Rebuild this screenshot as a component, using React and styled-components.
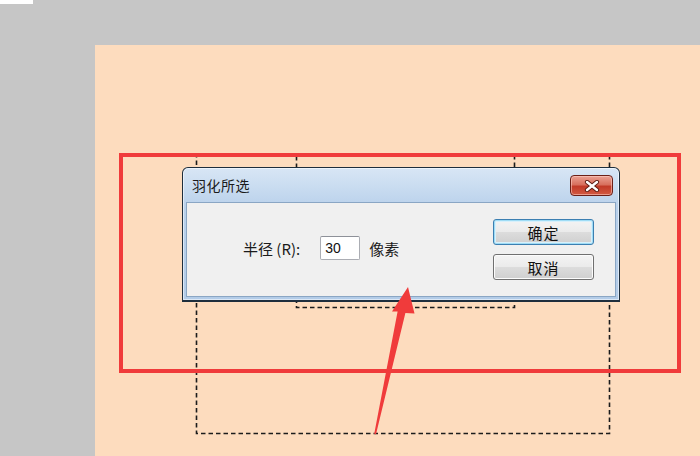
import React from "react";
import styled, { createGlobalStyle } from "styled-components";

const Global = createGlobalStyle`
  html, body { margin: 0; padding: 0; background: #c6c6c6; overflow: hidden; }
  #root { width: 700px; height: 456px; }
`;

const CJK = `"Noto Sans CJK SC", "Microsoft YaHei", sans-serif`;

const Page = styled.div`
  width: 700px;
  height: 456px;
  display: flex;
  flex-direction: column;
  background: #c6c6c6;
`;

const TopStrip = styled.div`
  width: 33px;
  height: 4px;
  background: #ffffff;
  flex: none;
`;

const Workspace = styled.div`
  flex: 1;
  display: flex;
  padding: 41px 0 0 95px;
  min-height: 0;
`;

const Canvas = styled.div`
  position: relative;
  flex: 1;
  background: #fddcbe;
  overflow: hidden;
`;

const Layer = styled.svg`
  position: absolute;
  left: 0;
  top: 0;
  width: 605px;
  height: 411px;
  pointer-events: none;
`;

const Window = styled.div`
  position: absolute;
  left: 87px;
  top: 122px;
  width: 438px;
  height: 135px;
  box-sizing: border-box;
  display: flex;
  flex-direction: column;
  border: 1px solid #1e2e3d;
  border-bottom-width: 2px;
  border-radius: 6px 6px 0 0;
  background: linear-gradient(#d8e6f5, #b9d1eb 30%, #b3cce8);
  padding: 0 3px 3px;
  box-shadow: inset 0 0 0 1px rgba(255, 255, 255, 0.55);
`;

const TitleBar = styled.div`
  height: 34px;
  flex: none;
  display: flex;
  align-items: center;
  justify-content: space-between;
  padding: 0 3px 0 6px;
`;

const Title = styled.span`
  font-family: ${CJK};
  font-size: 14px;
  color: #1b1b1b;
  letter-spacing: 0.5px;
`;

const CloseButton = styled.div`
  width: 43px;
  height: 21px;
  box-sizing: border-box;
  border: 1px solid #6b1f17;
  border-radius: 4px;
  background: linear-gradient(#eba193 0%, #d8705e 45%, #c23a28 55%, #d25a42 100%);
  box-shadow: inset 0 0 0 1px rgba(255, 210, 200, 0.55);
  display: flex;
  align-items: center;
  justify-content: center;
  margin-top: 1px;
`;

const Body = styled.div`
  flex: 1;
  background: #f0f0f0;
  border: 1px solid #8aa6c4;
  display: flex;
  justify-content: space-between;
  align-items: flex-start;
  padding: 16px 21px 0 56px;
`;

const FieldRow = styled.div`
  display: flex;
  align-items: center;
  margin-top: 17px;
  height: 24px;
`;

const Label = styled.span`
  font-family: ${CJK};
  font-size: 15px;
  color: #1b1b1b;
  margin-right: ${(p) => p.$gap || 0}px;
  margin-left: ${(p) => p.$left || 0}px;
  white-space: pre;
`;

const Input = styled.div`
  width: 40px;
  height: 24px;
  box-sizing: border-box;
  border: 1px solid #abadb3;
  border-top-color: #8e9199;
  border-radius: 2px;
  background: #ffffff;
  font-family: "Liberation Sans", Arial, sans-serif;
  font-size: 14px;
  color: #111;
  padding: 3px 0 0 4px;
`;

const ButtonColumn = styled.div`
  display: flex;
  flex-direction: column;
  gap: 9px;
`;

const Button = styled.div`
  width: 101px;
  height: 26px;
  box-sizing: border-box;
  border-radius: 3px;
  border: 1px solid ${(p) => (p.$primary ? "#3c7fb1" : "#707070")};
  background: linear-gradient(#f4f4f4 0%, #ebebeb 48%, #dcdcdc 52%, #cfcfcf 100%);
  box-shadow: ${(p) =>
    p.$primary
      ? "inset 0 0 0 1px #9fdcf5, inset 0 0 0 2px #d8f0fb"
      : "inset 0 0 0 1px #fcfcfc"};
  font-family: ${CJK};
  font-size: 15px;
  color: #111;
  display: flex;
  align-items: center;
  justify-content: center;
  letter-spacing: 1px;
`;

function CloseGlyph() {
  return (
    <svg width="16" height="12" viewBox="0 0 16 12">
      <path d="M3 2 L13 10 M13 2 L3 10" stroke="#5a1a12" strokeWidth="4.2" strokeLinecap="round" />
      <path d="M3 2 L13 10 M13 2 L3 10" stroke="#ffffff" strokeWidth="2.4" strokeLinecap="round" />
    </svg>
  );
}

function Selections() {
  const dash = { fill: "none", stroke: "#1c1c1c", strokeWidth: 1.6, strokeDasharray: "4.5 3" };
  return (
    <Layer viewBox="0 0 605 411">
      <rect x="101.5" y="110.5" width="413" height="278" style={dash} />
      <rect x="201.5" y="110.5" width="218" height="152" style={dash} />
    </Layer>
  );
}

function Annotations() {
  return (
    <Layer viewBox="0 0 605 411">
      <rect x="26" y="110" width="558" height="216" fill="none" stroke="#f03b3b" strokeWidth="4" />
      <polygon
        points="279.2,389 302.6,266.5 297,266.5 313,242 319.5,268.5 310.4,268 281,389.2"
        fill="#f03b3b"
      />
    </Layer>
  );
}

export default function App() {
  return (
    <>
      <Global />
      <Page>
        <TopStrip />
        <Workspace>
          <Canvas>
            <Selections />
            <Window>
              <TitleBar>
                <Title>羽化所选</Title>
                <CloseButton>
                  <CloseGlyph />
                </CloseButton>
              </TitleBar>
              <Body>
                <FieldRow>
                  <Label $gap={20}>半径 (R):</Label>
                  <Input>30</Input>
                  <Label $left={9}>像素</Label>
                </FieldRow>
                <ButtonColumn>
                  <Button $primary>确定</Button>
                  <Button>取消</Button>
                </ButtonColumn>
              </Body>
            </Window>
            <Annotations />
          </Canvas>
        </Workspace>
      </Page>
    </>
  );
}
